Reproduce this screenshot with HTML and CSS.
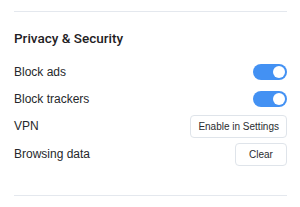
FILE: index.html
```html
<!DOCTYPE html>
<html>
<head>
<meta charset="utf-8">
<link rel="stylesheet" href="styles.css">
</head>
<body>
<div class="panel">
  <section class="section">
    <h2 class="title">Privacy &amp; Security</h2>
    <div class="rows">
      <div class="row">
        <span class="label">Block ads</span>
        <span class="toggle on"><span class="knob"></span></span>
      </div>
      <div class="row">
        <span class="label">Block trackers</span>
        <span class="toggle on"><span class="knob"></span></span>
      </div>
      <div class="row row-btn">
        <span class="label">VPN</span>
        <button class="btn">Enable in Settings</button>
      </div>
      <div class="row row-btn">
        <span class="label">Browsing data</span>
        <button class="btn">Clear</button>
      </div>
    </div>
  </section>
</div>
</body>
</html>
```

FILE: styles.css
```css
html, body {
  margin: 0;
  padding: 0;
  background: #ffffff;
}
body {
  font-family: "Liberation Sans", Arial, sans-serif;
  color: #222426;
}
.panel {
  padding: 11px 13px 0 14px;
}
.section {
  border-top: 1px solid #e4e8ee;
  border-bottom: 1px solid #e4e8ee;
  padding: 17px 0 27px 0;
}
.title {
  margin: 0 0 11px 0;
  font-family: Roboto, "Liberation Sans", sans-serif;
  font-weight: 500;
  font-size: 13.5px;
  line-height: 18px;
  color: #1f2124;
}
.rows {
  display: flex;
  flex-direction: column;
}
.row {
  display: flex;
  align-items: center;
  justify-content: space-between;
  height: 27px;
}
.row-btn {
  height: 28px;
}
.label {
  font-size: 12px;
  color: #26282b;
}
.toggle {
  position: relative;
  width: 34px;
  height: 16px;
  border-radius: 8px;
  background: #d9dde3;
  display: flex;
  align-items: center;
  padding: 0 2px;
  box-sizing: border-box;
}
.toggle.on {
  background: #4391f3;
  justify-content: flex-end;
}
.knob {
  width: 12px;
  height: 12px;
  border-radius: 50%;
  background: #ffffff;
}
.btn {
  font-family: "Liberation Sans", Arial, sans-serif;
  font-size: 10px;
  color: #2a2c30;
  background: #ffffff;
  border: 1px solid #dfe4ea;
  border-radius: 4px;
  height: 23px;
  min-width: 52px;
  padding: 0 7px;
  box-sizing: border-box;
  margin: 0;
}
```
